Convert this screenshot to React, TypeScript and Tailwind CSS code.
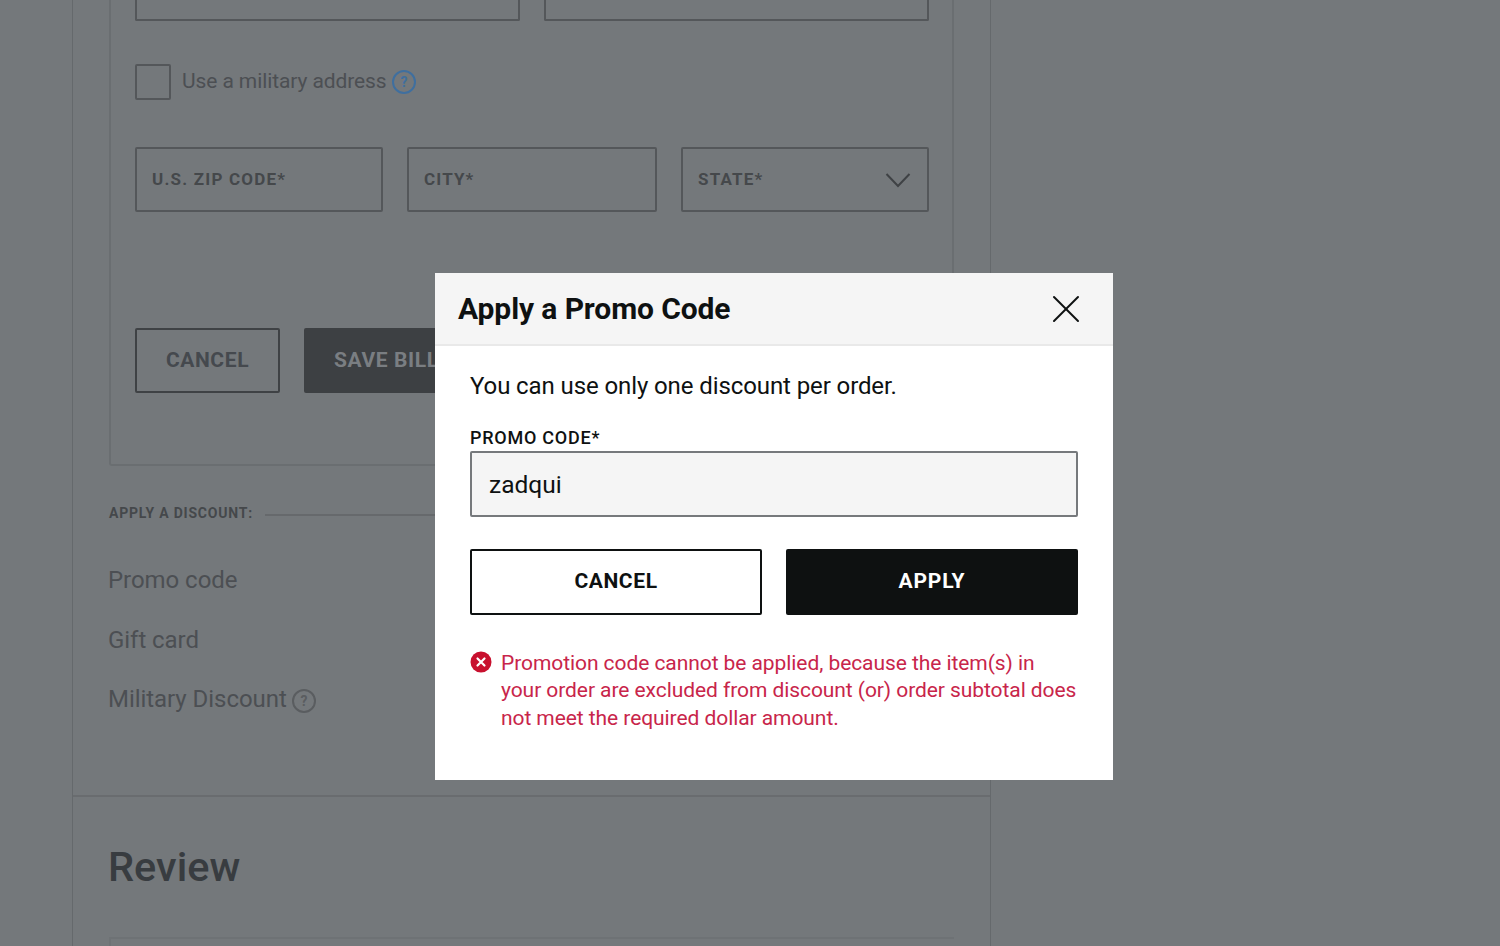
import { X } from "lucide-react";

function Field({ label, className, chevron }: { label: string; className: string; chevron?: boolean }) {
  return (
    <div className={`h-[65px] border-2 border-[#54575a] rounded-[2px] flex items-center justify-between pl-[15px] pr-[16px] ${className}`}>
      <span className="text-[17px] font-bold tracking-[1.2px] text-[#45484b]">{label}</span>
      {chevron && (
        <svg width="26" height="16" viewBox="0 0 26 16" fill="none" stroke="#3f4245" strokeWidth="2">
          <path d="M1.5 2 L13 14 L24.5 2" />
        </svg>
      )}
    </div>
  );
}

function HelpIcon({ color, size = 24 }: { color: string; size?: number }) {
  return (
    <svg width={size} height={size} viewBox="0 0 24 24" fill="none">
      <circle cx="12" cy="12" r="11" stroke={color} strokeWidth="2" />
      <text x="12" y="17" textAnchor="middle" fontSize="14" fontWeight="700" fill={color} fontFamily="Roboto, sans-serif">
        ?
      </text>
    </svg>
  );
}

function PromoModal() {
  return (
    <div className="absolute left-[435px] top-[273px] w-[678px] h-[507px] bg-white">
      <div className="h-[73px] bg-[#f5f5f5] border-b-2 border-[#e9e9e9] flex items-center justify-between pl-[23px] pr-[23px]">
        <h2 className="text-[30px] font-bold text-[#0e1111] tracking-[-0.1px]">Apply a Promo Code</h2>
        <X size={48} strokeWidth={1} className="text-[#0e1111]" />
      </div>
      <div className="px-[35px] pt-[24px]">
        <p className="text-[24px] leading-[32px] text-[#0e1111] tracking-[-0.1px]">You can use only one discount per order.</p>
        <label className="block mt-[25px] text-[18px] leading-[22px] font-medium tracking-[0.75px] text-[#0e1111]">PROMO CODE*</label>
        <div className="mt-[2px] h-[66px] bg-[#f5f5f5] border-2 border-[#76797c] rounded-[2px] flex items-center pl-[17px] pt-[3px] text-[24.5px] text-[#0e1111]">
          zadqui
        </div>
        <div className="mt-[32px] flex gap-[24px]">
          <button className="w-[292px] h-[66px] bg-white border-2 border-[#0e1111] rounded-[2px] text-[21px] font-bold tracking-[0.6px] text-[#0e1111]">
            CANCEL
          </button>
          <button className="w-[292px] h-[66px] bg-[#0e1111] rounded-[2px] text-[21px] font-bold tracking-[0.8px] text-white">
            APPLY
          </button>
        </div>
        <div className="mt-[34.7px] flex gap-[9px] items-start">
          <svg width="22" height="22" viewBox="0 0 22 22" className="mt-[1px] shrink-0">
            <circle cx="11" cy="11" r="10.5" fill="#c8102e" />
            <path d="M7.5 7.5 L14.5 14.5 M14.5 7.5 L7.5 14.5" stroke="#fff" strokeWidth="2.2" strokeLinecap="round" />
          </svg>
          <p className="text-[21px] leading-[27.5px] text-[#c8254a] tracking-[-0.07px]">
            Promotion code cannot be applied, because the item(s) in your order are excluded from discount (or) order subtotal does not meet the required dollar amount.
          </p>
        </div>
      </div>
    </div>
  );
}

export default function App() {
  return (
    <div className="relative h-[946px] w-[1500px] overflow-hidden bg-[#74787b] font-['Roboto',sans-serif]">
      <div className="ml-[72px] w-[919px] h-full border-x border-[#65696c] flex flex-col">
        <div className="px-[36px]">
          <div className="h-[466px] border-x-2 border-b-2 border-[#6a6e71] rounded-b-[3px] pl-[24px]">
            <div className="flex gap-[24px]">
              <div className="w-[385px] h-[21px] border-x-2 border-b-2 border-[#54575a] rounded-b-[2px]" />
              <div className="w-[385px] h-[21px] border-x-2 border-b-2 border-[#54575a] rounded-b-[2px]" />
            </div>
            <div className="mt-[43px] flex items-center">
              <div className="w-[36px] h-[36px] border-2 border-[#54575a] rounded-[2px]" />
              <span className="ml-[11px] text-[21px] tracking-[-0.1px] text-[#4c4f53]">Use a military address</span>
              <span className="ml-[5px] flex">
                <HelpIcon color="#3f6f9f" />
              </span>
            </div>
            <div className="mt-[47px] flex gap-[24px]">
              <Field label="U.S. ZIP CODE*" className="w-[248px]" />
              <Field label="CITY*" className="w-[250px]" />
              <Field label="STATE*" className="w-[248px]" chevron />
            </div>
            <div className="mt-[116px] flex gap-[24px]">
              <button className="w-[145px] h-[65px] border-2 border-[#3f4245] rounded-[2px] text-[21px] font-bold tracking-[0.6px] text-[#45494e]">
                CANCEL
              </button>
              <button className="w-[300px] h-[65px] bg-[#3d4043] rounded-[2px] text-left pl-[30px] text-[21px] font-bold tracking-[0.6px] text-[#7a7e82]">
                SAVE BILLING ADDRESS
              </button>
            </div>
          </div>
          <div className="mt-[37px] flex items-center">
            <span className="text-[14px] leading-[20px] font-bold tracking-[0.8px] text-[#45484b]">APPLY A DISCOUNT:</span>
            <div className="ml-[12px] mt-[3px] flex-1 h-[2px] bg-[#66696c]" />
          </div>
          <div className="mt-[28px] -ml-[1px] text-[24px] leading-[59.5px] tracking-[-0.05px] text-[#4c4f53]">
            <div>Promo code</div>
            <div>Gift card</div>
            <div className="flex items-center">
              Military Discount
              <span className="ml-[5px] mt-[3px] flex">
                <HelpIcon color="#5a5d60" />
              </span>
            </div>
          </div>
        </div>
        <div className="mt-[65.5px] border-t-2 border-[#696c6f] px-[36px]">
          <h2 className="mt-[40px] -ml-[1px] text-[41.5px] leading-[60px] font-medium text-[#383c40]">Review</h2>
          <div className="mt-[40px] h-[10px] border-t-2 border-l-2 border-[#6e7275]" />
        </div>
      </div>
      <PromoModal />
    </div>
  );
}
